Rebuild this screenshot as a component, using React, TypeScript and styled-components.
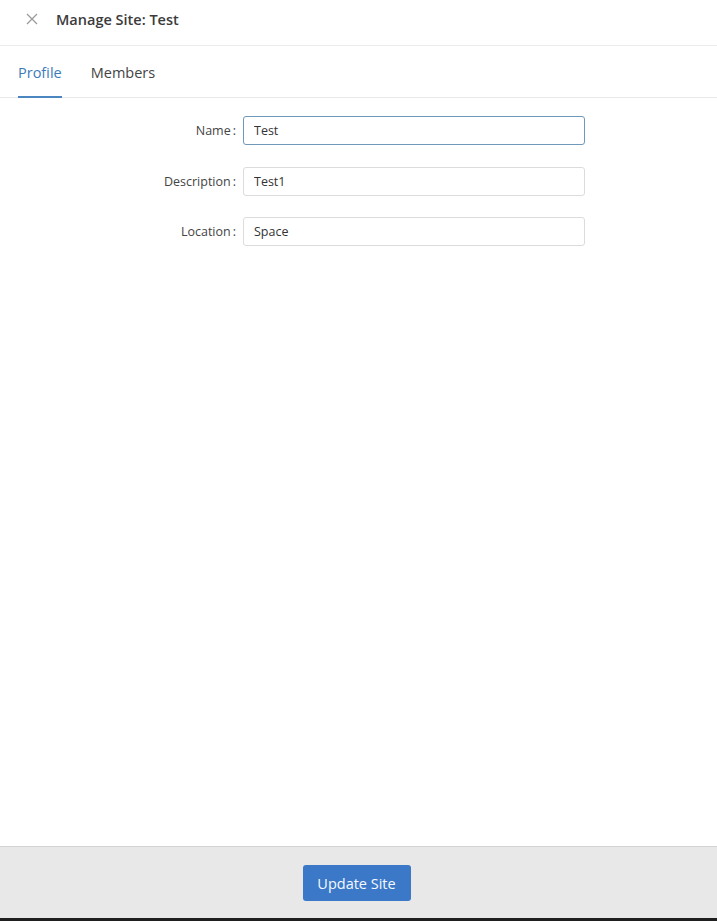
import React, { useState } from 'react';
import styled, { createGlobalStyle } from 'styled-components';

const GlobalStyle = createGlobalStyle`
  html, body, #root {
    margin: 0;
    padding: 0;
    height: 100%;
  }
  body {
    font-family: 'Open Sans', 'Noto Sans', sans-serif;
    background: #ffffff;
    color: #333;
  }
`;

const Page = styled.div`
  display: flex;
  flex-direction: column;
  height: 921px;
  box-sizing: border-box;
  border-bottom: 3px solid #1f1f1f;
`;

const Header = styled.div`
  display: flex;
  align-items: center;
  height: 46px;
  padding: 0 0 7px 24px;
  border-bottom: 1px solid #ececec;
  box-sizing: border-box;
`;

const CloseButton = styled.button`
  display: flex;
  align-items: center;
  justify-content: center;
  width: 16px;
  height: 16px;
  padding: 0;
  margin: 0 16px 0 0;
  border: 0;
  background: none;
  cursor: pointer;
`;

const Title = styled.h1`
  margin: 0;
  font-size: 14.5px;
  font-weight: 600;
  color: #3b3b3b;
`;

const Tabs = styled.div`
  display: flex;
  gap: 29px;
  height: 52px;
  padding: 0 18px;
  border-bottom: 1px solid #e8e8e8;
  box-sizing: border-box;
`;

const Tab = styled.button<{ $active?: boolean }>`
  display: flex;
  align-items: center;
  padding: 2px 0 0;
  border: 0;
  background: none;
  font-family: inherit;
  font-size: 14.5px;
  color: ${p => (p.$active ? '#3c7bb8' : '#444')};
  cursor: pointer;
  border-bottom: 2px solid ${p => (p.$active ? '#4a86bf' : 'transparent')};
  margin-bottom: -1px;
`;

const Body = styled.div`
  flex: 1;
  padding: 18px 0 0;
`;

const Form = styled.form`
  display: flex;
  flex-direction: column;
  gap: 21.5px;
`;

const Row = styled.div`
  display: grid;
  grid-template-columns: 238px 342px;
  align-items: center;
  gap: 5px;
`;

const Label = styled.label`
  text-align: right;
  font-size: 12.5px;
  color: #444;
  white-space: nowrap;

  &::after {
    content: ':';
    margin: 0 2px 0 2px;
  }
`;

const Input = styled.input<{ $focused?: boolean }>`
  height: 29px;
  box-sizing: border-box;
  padding: 0 10px;
  border: 1px solid ${p => (p.$focused ? '#6f98b9' : '#dcdcdc')};
  border-radius: 3px;
  font-family: inherit;
  font-size: 12.5px;
  color: #333;
  outline: none;
  background: #fff;
`;

const Footer = styled.div`
  display: flex;
  justify-content: center;
  align-items: flex-start;
  height: 72px;
  padding: 18px 4px 0 0;
  box-sizing: border-box;
  background: #e8e8e8;
  border-top: 1px solid #d3d3d3;
`;

const PrimaryButton = styled.button`
  width: 108px;
  height: 36px;
  border: 0;
  border-radius: 3px;
  background: #3b78c8;
  color: #f4f8ff;
  font-family: inherit;
  font-size: 14.5px;
  cursor: pointer;
`;

const fields = [
  { label: 'Name', value: 'Test', focused: true },
  { label: 'Description', value: 'Test1' },
  { label: 'Location', value: 'Space' },
];

export default function App() {
  const [tab, setTab] = useState('Profile');
  return (
    <Page>
      <GlobalStyle />
      <Header>
        <CloseButton aria-label="Close">
          <svg width="12" height="12" viewBox="0 0 12 12">
            <path d="M1 1 L11 11 M11 1 L1 11" stroke="#9a9a9a" strokeWidth="1.3" fill="none" />
          </svg>
        </CloseButton>
        <Title>Manage Site: Test</Title>
      </Header>
      <Tabs>
        {['Profile', 'Members'].map(t => (
          <Tab key={t} $active={tab === t} onClick={() => setTab(t)}>
            {t}
          </Tab>
        ))}
      </Tabs>
      <Body>
        <Form onSubmit={e => e.preventDefault()}>
          {fields.map(f => (
            <Row key={f.label}>
              <Label>{f.label}</Label>
              <Input defaultValue={f.value} $focused={f.focused} />
            </Row>
          ))}
        </Form>
      </Body>
      <Footer>
        <PrimaryButton>Update Site</PrimaryButton>
      </Footer>
    </Page>
  );
}
